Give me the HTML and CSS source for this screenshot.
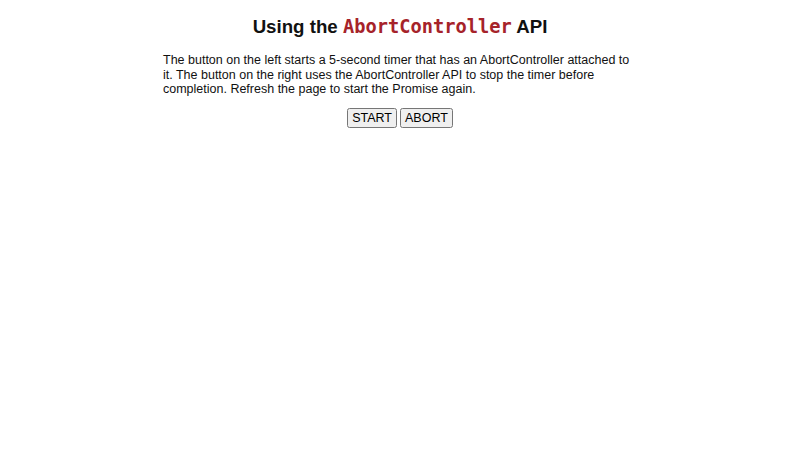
FILE: index.html
```html
<!DOCTYPE html>
<html lang="en">
<head>
    <meta charset="UTF-8">
    <meta name="viewport" content="width=device-width, initial-scale=1.0">
    <title>AbortController Demo</title>
    <link rel="stylesheet" href="styles.css">
</head>
<body>
    <main class="demo">
        <h1>Using the <code>AbortController</code> API</h1>
        <p>The button on the left starts a 5-second timer that has an AbortController attached to it. The button on the right uses the AbortController API to stop the timer before completion. Refresh the page to start the Promise again.</p>
        <div class="controls">
            <button id="start">START</button>
            <button id="abort">ABORT</button>
        </div>
    </main>
</body>
</html>
```

FILE: styles.css
```css
body {
    font-family: 'Liberation Sans', Arial, sans-serif;
    font-size: 12.5px;
    margin: 0;
    padding: 8px;
    color: #111;
    background: #fff;
}

.demo {
    max-width: 474px;
    margin: 0 auto;
}

h1 {
    font-size: 18.7px;
    text-align: center;
    margin: 8px 0 15px;
}

h1 code {
    font-family: 'DejaVu Sans Mono', monospace;
    color: #a6232a;
}

p {
    line-height: 14.7px;
    margin: 0 0 11px;
}

.controls {
    display: flex;
    justify-content: center;
    gap: 3px;
}

.controls button {
    font-family: 'Liberation Sans', Arial, sans-serif;
    font-size: 12.5px;
    padding: 1px 3px;
}
```
